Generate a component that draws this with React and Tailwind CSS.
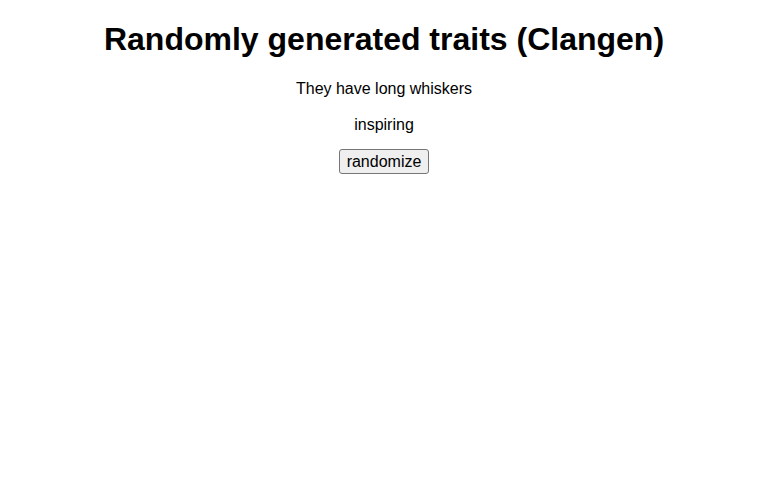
export default function App() {
  return (
    <div className="text-center text-black bg-white min-h-[480px] flex flex-col items-center" style={{ fontFamily: '"Liberation Sans", Arial, sans-serif' }}>
      <h1 className="text-[32px] font-bold leading-[37px] mt-[21.44px] mb-[21.44px]">Randomly generated traits (Clangen)</h1>
      <p className="text-base leading-[18.4px] mb-[18px]">They have long whiskers</p>
      <p className="text-base leading-[18.4px] mb-[14px]">inspiring</p>
      <button className="text-base leading-[20px] px-[7px] pt-[2px] pb-[1px] border border-[#767676] bg-[#efefef] rounded-[3px] text-black hover:bg-[#e5e5e5]">randomize</button>
    </div>
  );
}
